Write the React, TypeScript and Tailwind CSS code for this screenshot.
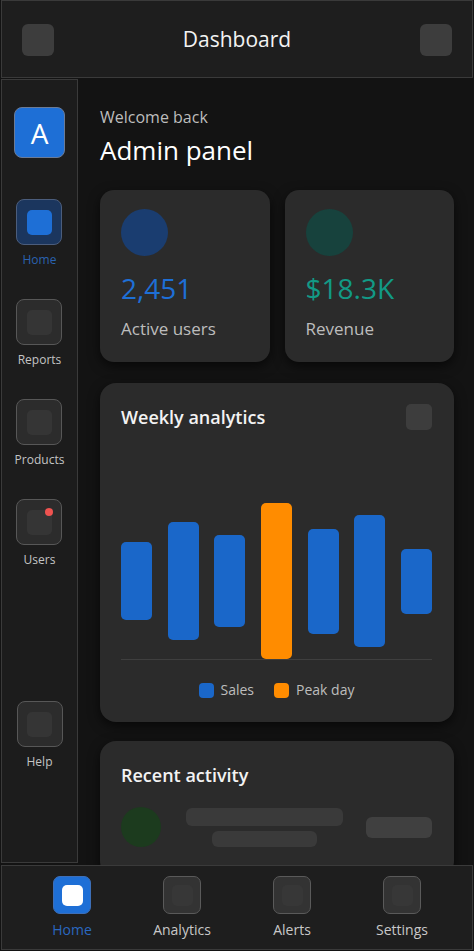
import React from "react";

const bars = [
  { h: 78, peak: false },
  { h: 118, peak: false },
  { h: 92, peak: false },
  { h: 156, peak: true },
  { h: 105, peak: false },
  { h: 132, peak: false },
  { h: 65, peak: false },
];

function SideItem({
  label,
  active = false,
  dot = false,
}: {
  label: string;
  active?: boolean;
  dot?: boolean;
}) {
  return (
    <div className="flex flex-col items-center">
      <div
        className={
          active
            ? "relative w-[46px] h-[46px] rounded-[8px] border border-[#4b5d7c] bg-[#1b365e] flex items-center justify-center"
            : "relative w-[46px] h-[46px] rounded-[8px] border border-[#575757] bg-[#2c2c2c] flex items-center justify-center"
        }
      >
        <div
          className={
            active
              ? "w-[25px] h-[25px] rounded-[5px] bg-[#1e6fd6]"
              : "w-[25px] h-[25px] rounded-[5px] bg-[#353535]"
          }
        />
        {dot && (
          <div className="absolute top-[8px] right-[8px] w-[8px] h-[8px] rounded-full bg-[#ef5350]" />
        )}
      </div>
      <span
        className={
          active
            ? "mt-[6px] text-[12px] leading-[17px] text-[#2a62b0]"
            : "mt-[6px] text-[12px] leading-[17px] text-[#c4c4c4]"
        }
      >
        {label}
      </span>
    </div>
  );
}

function NavItem({ label, active = false }: { label: string; active?: boolean }) {
  return (
    <div className="flex flex-col items-center">
      <div
        className={
          active
            ? "w-[38px] h-[38px] rounded-[7px] bg-[#1e6fd6] border border-[#3d6fb8] flex items-center justify-center"
            : "w-[38px] h-[38px] rounded-[7px] bg-[#333333] border border-[#5a5a5a] flex items-center justify-center"
        }
      >
        <div
          className={
            active
              ? "w-[21px] h-[21px] rounded-[5px] bg-white"
              : "w-[21px] h-[21px] rounded-[5px] bg-[#373737]"
          }
        />
      </div>
      <span
        className={
          active
            ? "mt-[6px] text-[14px] leading-[20px] text-[#2a68c0]"
            : "mt-[6px] text-[14px] leading-[20px] text-[#c8c8c8]"
        }
      >
        {label}
      </span>
    </div>
  );
}

export default function App() {
  return (
    <div className="w-[474px] h-[951px] bg-[#131313] flex flex-col overflow-hidden font-['Open_Sans','Noto_Sans',sans-serif]">
      {/* top bar */}
      <header className="h-[78px] shrink-0 mx-px border border-[#3a3a3a] bg-[#1e1e1e] flex items-center justify-between px-[20px] pt-[2px]">
        <div className="w-[32px] h-[32px] rounded-[6px] bg-[#3d3d3d]" />
        <h1 className="text-[21px] font-medium text-[#f3f3f3]">Dashboard</h1>
        <div className="w-[32px] h-[32px] rounded-[6px] bg-[#3d3d3d]" />
      </header>

      <div className="flex-1 flex min-h-0 mt-px">
        {/* side rail */}
        <aside className="w-[77px] shrink-0 ml-px mb-[2px] border border-[#3a3a3a] bg-[#1c1c1c] flex flex-col items-center pt-[27px]">
          <div className="w-[51px] h-[51px] rounded-[8px] bg-[#1e6fd6] border border-[#6b7b96] flex items-center justify-center text-white text-[28px] leading-none font-medium">
            A
          </div>
          <div className="mt-[41px] flex flex-col items-center gap-[31px]">
            <SideItem label="Home" active />
            <SideItem label="Reports" />
            <SideItem label="Products" />
            <SideItem label="Users" dot />
          </div>
          <div className="mt-[133px]">
            <SideItem label="Help" />
          </div>
        </aside>

        {/* main content */}
        <main className="flex-1 min-w-0 overflow-hidden pl-[22px] pr-[20px] pt-[26px]">
          <p className="text-[16px] leading-[24px] text-[#bdbdbd]">Welcome back</p>
          <h2 className="mt-[4px] text-[26px] leading-[34px] font-medium text-white">Admin panel</h2>

          <div className="mt-[23px] grid grid-cols-2 gap-[15px]">
            <div className="h-[172px] rounded-[14px] bg-[#2b2b2b] shadow-[0_4px_12px_rgba(0,0,0,0.6)] px-[21px] pt-[19px]">
              <div className="w-[47px] h-[47px] rounded-full bg-[#1a3d70]" />
              <div className="mt-[14px] text-[28px] leading-[36px] text-[#1e6fd6]">2,451</div>
              <div className="mt-[11px] text-[17px] leading-[24px] text-[#bdbdbd]">Active users</div>
            </div>
            <div className="h-[172px] rounded-[14px] bg-[#2b2b2b] shadow-[0_4px_12px_rgba(0,0,0,0.6)] px-[21px] pt-[19px]">
              <div className="w-[47px] h-[47px] rounded-full bg-[#17423d]" />
              <div className="mt-[14px] text-[28px] leading-[36px] text-[#129a86]">$18.3K</div>
              <div className="mt-[11px] text-[17px] leading-[24px] text-[#bdbdbd]">Revenue</div>
            </div>
          </div>

          {/* weekly chart */}
          <section className="mt-[21px] rounded-[16px] bg-[#2b2b2b] shadow-[0_4px_12px_rgba(0,0,0,0.6)] pl-[21px] pr-[22px] pt-[21px] pb-[22px]">
            <div className="flex items-center justify-between">
              <h3 className="text-[18px] leading-[26px] font-semibold text-[#f3f3f3]">Weekly analytics</h3>
              <div className="w-[26px] h-[26px] rounded-[5px] bg-[#3d3d3d]" />
            </div>
            <div className="mt-[73px] h-[157px] border-b border-[#3f3f3f] flex items-center justify-between">
              {bars.map((b, i) => (
                <div
                  key={i}
                  className={
                    b.peak
                      ? "w-[31px] rounded-[5px] bg-[#ff8c00]"
                      : "w-[31px] rounded-[5px] bg-[#1a67c9]"
                  }
                  style={{ height: b.h }}
                />
              ))}
            </div>
            <div className="mt-[20px] flex items-center justify-center gap-[20px] text-[14px] leading-[20px] text-[#bdbdbd]">
              <div className="flex items-center gap-[7px]">
                <span className="w-[15px] h-[15px] rounded-[4px] bg-[#1a67c9]" />
                Sales
              </div>
              <div className="flex items-center gap-[7px]">
                <span className="w-[15px] h-[15px] rounded-[4px] bg-[#ff8c00]" />
                Peak day
              </div>
            </div>
          </section>

          {/* recent activity */}
          <section className="mt-[19px] rounded-[16px] bg-[#2b2b2b] shadow-[0_4px_12px_rgba(0,0,0,0.6)] pl-[21px] pr-[22px] pt-[21px] pb-[30px]">
            <h3 className="text-[18px] leading-[26px] font-semibold text-[#f3f3f3]">Recent activity</h3>
            <div className="mt-[19px] flex items-center">
              <div className="w-[40px] h-[40px] rounded-full bg-[#1c3b1e]" />
              <div className="ml-[25px] w-[157px] flex flex-col items-center gap-[5px]">
                <div className="w-[157px] h-[18px] rounded-[6px] bg-[#3a3a3a]" />
                <div className="w-[105px] h-[16px] rounded-[6px] bg-[#3a3a3a]" />
              </div>
              <div className="ml-auto w-[66px] h-[21px] rounded-[6px] bg-[#404040]" />
            </div>
          </section>
        </main>
      </div>

      {/* bottom tabs */}
      <nav className="h-[85px] shrink-0 mx-px mb-px border border-[#3a3a3a] bg-[#1e1e1e] grid grid-cols-4 px-[15px] pt-[10px]">
        <NavItem label="Home" active />
        <NavItem label="Analytics" />
        <NavItem label="Alerts" />
        <NavItem label="Settings" />
      </nav>
    </div>
  );
}
